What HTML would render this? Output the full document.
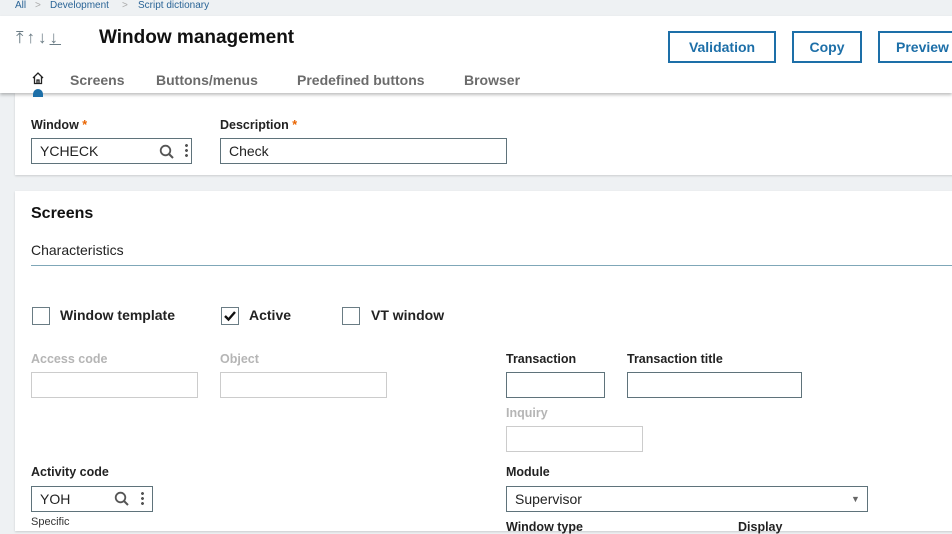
<!DOCTYPE html>
<html><head><meta charset="utf-8"><style>
*{box-sizing:border-box;margin:0;padding:0}
body{width:952px;height:524px;overflow:hidden;background:#eef1f3;font-family:"Liberation Sans",sans-serif;position:relative;color:#1f1f1f}
.a{position:absolute;white-space:nowrap}
.bc{font-size:10px;color:#2a6496;top:0}
.hdr{left:0;top:16px;width:952px;height:77px;background:#fff;box-shadow:0 2px 3px rgba(0,0,0,.25);z-index:2}
.btn{top:31px;height:32px;border:2px solid #1d6fa8;color:#1d6fa8;font-weight:bold;font-size:14px;text-align:center;line-height:28px;background:#fff}
.tab{top:71px;font-size:14px;font-weight:bold;color:#6b6b6b}
.card{background:#fff;left:15px;width:960px;box-shadow:0 1px 2px rgba(0,0,0,.15)}
.lbl{font-size:12.5px;font-weight:bold;color:#222}
.dis{color:#b5b5b5}
.inp{border:1px solid #5f737b;background:#fff;height:26px;font-size:14px;padding-left:8px;line-height:24px;color:#222}
.inpd{border:1px solid #ccc;background:#fff;height:26px}
.star{color:#e96400}
.cb{width:18px;height:18px;border:1px solid #6a7c84;background:#fff}
.cbl{font-size:14px;font-weight:bold;color:#222}
</style></head><body>
<div class="a bc" style="left:15px">All</div>
<div class="a bc" style="left:35px;color:#aaa">&gt;</div>
<div class="a bc" style="left:50px">Development</div>
<div class="a bc" style="left:122px;color:#aaa">&gt;</div>
<div class="a bc" style="left:138px">Script dictionary</div>

<div class="a hdr">
  <div class="a" style="left:16px;top:12px;font-size:17px;color:#6b7c85;letter-spacing:3px">⤒↑↓<span style="text-decoration:underline">↓</span></div>
  <div class="a" style="left:99px;top:11px;font-size:19px;font-weight:bold;color:#111">Window management</div>
  <div class="a btn" style="left:668px;top:15px;width:108px">Validation</div>
  <div class="a btn" style="left:792px;top:15px;width:70px">Copy</div>
  <div class="a btn" style="left:878px;top:15px;width:90px;text-align:left;padding-left:16px">Preview</div>
  <svg class="a" style="left:31px;top:55px" width="14" height="14" viewBox="0 0 14 14"><path d="M2 7 L7 2 L12 7 M3.5 6 V12.5 H10.5 V6 M6 12.5 V9 H8 V12.5" fill="none" stroke="#222" stroke-width="1.3"/></svg>
  <div class="a tab" style="left:70px;top:56px">Screens</div>
  <div class="a tab" style="left:156px;top:56px">Buttons/menus</div>
  <div class="a tab" style="left:297px;top:56px">Predefined buttons</div>
  <div class="a tab" style="left:464px;top:56px">Browser</div>
</div>
<div class="a" style="left:33px;top:89px;width:10px;height:8px;background:#1d6fa8;border-radius:5px 5px 0 0;z-index:3"></div>

<div class="a card" style="top:93px;height:82px"></div>
<div class="a lbl" style="left:31px;top:118px">Window <span class="star">*</span></div>
<div class="a inp" style="left:31px;top:138px;width:161px">YCHECK</div>
<svg class="a" style="left:159px;top:144px" width="16" height="16" viewBox="0 0 16 16"><circle cx="6.5" cy="6.5" r="4.8" fill="none" stroke="#555" stroke-width="1.8"/><path d="M10 10 L14 14" stroke="#555" stroke-width="2"/></svg>
<div class="a" style="left:185px;top:143px;width:3px;height:15px;background:radial-gradient(circle,#555 1.3px,transparent 1.6px) 0 0/3px 5px"></div>
<div class="a lbl" style="left:220px;top:118px">Description <span class="star">*</span></div>
<div class="a inp" style="left:220px;top:138px;width:287px">Check</div>

<div class="a card" style="top:191px;height:340px"></div>
<div class="a" style="left:31px;top:205px;font-size:16px;font-weight:bold;color:#111">Screens</div>
<div class="a" style="left:31px;top:242px;font-size:14px;color:#222">Characteristics</div>
<div class="a" style="left:31px;top:265px;width:921px;height:1px;background:#7fa7b8"></div>

<div class="a cb" style="left:32px;top:307px"></div>
<div class="a cbl" style="left:60px;top:307px">Window template</div>
<div class="a cb" style="left:221px;top:307px"><svg width="16" height="16" viewBox="0 0 16 16"><path d="M3 8 L6.5 11.5 L13 4" fill="none" stroke="#111" stroke-width="2.4"/></svg></div>
<div class="a cbl" style="left:249px;top:307px">Active</div>
<div class="a cb" style="left:342px;top:307px"></div>
<div class="a cbl" style="left:371px;top:307px">VT window</div>

<div class="a lbl dis" style="left:31px;top:352px">Access code</div>
<div class="a inpd" style="left:31px;top:372px;width:167px"></div>
<div class="a lbl dis" style="left:220px;top:352px">Object</div>
<div class="a inpd" style="left:220px;top:372px;width:167px"></div>
<div class="a lbl" style="left:506px;top:352px">Transaction</div>
<div class="a inp" style="left:506px;top:372px;width:99px"></div>
<div class="a lbl" style="left:627px;top:352px">Transaction title</div>
<div class="a inp" style="left:627px;top:372px;width:175px"></div>
<div class="a lbl dis" style="left:506px;top:406px">Inquiry</div>
<div class="a inpd" style="left:506px;top:426px;width:137px"></div>

<div class="a lbl" style="left:31px;top:465px">Activity code</div>
<div class="a inp" style="left:31px;top:486px;width:122px">YOH</div>
<svg class="a" style="left:114px;top:491px" width="16" height="16" viewBox="0 0 16 16"><circle cx="6.5" cy="6.5" r="4.8" fill="none" stroke="#555" stroke-width="1.8"/><path d="M10 10 L14 14" stroke="#555" stroke-width="2"/></svg>
<div class="a" style="left:141px;top:491px;width:3px;height:15px;background:radial-gradient(circle,#555 1.3px,transparent 1.6px) 0 0/3px 5px"></div>
<div class="a" style="left:31px;top:516px;font-size:11px;color:#333">Specific</div>
<div class="a lbl" style="left:506px;top:465px">Module</div>
<div class="a inp" style="left:506px;top:486px;width:362px">Supervisor</div>
<div class="a" style="left:851px;top:494px;font-size:9px;color:#666">▼</div>
<div class="a lbl" style="left:506px;top:520px">Window type</div>
<div class="a lbl" style="left:738px;top:520px">Display</div>
</body></html>
